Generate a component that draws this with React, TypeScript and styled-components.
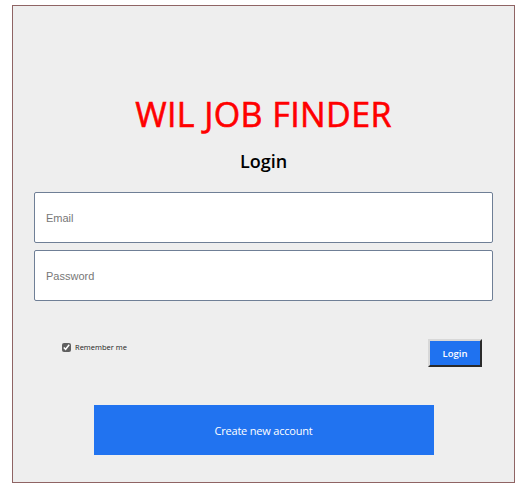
import React from "react";
import styled, { createGlobalStyle } from "styled-components";

const Global = createGlobalStyle`
  html, body { margin: 0; padding: 0; background: #ffffff; }
  body { font-family: "Open Sans", "Noto Sans", sans-serif; }
`;

const Frame = styled.div`
  box-sizing: border-box;
  margin: 5px 0 0 12px;
  width: 503px;
  height: 478px;
  border: 1px solid #8f6464;
  background: #eeeeee;
  padding: 0 21px 0 21px;
  display: flex;
  flex-direction: column;
  align-items: stretch;
`;

const Title = styled.h1`
  margin: 88px 0 0;
  font-family: "Open Sans", sans-serif;
  font-weight: 400;
  font-size: 34px;
  line-height: 40px;
  color: #ff0000;
  -webkit-text-stroke: 0.6px #ff0000;
  text-align: center;
  letter-spacing: 0.4px;
`;

const Heading = styled.h2`
  margin: 15px 0 0;
  font-family: "Open Sans", sans-serif;
  font-weight: 600;
  font-size: 18px;
  line-height: 24px;
  color: #000000;
  text-align: center;
`;

const Fields = styled.div`
  margin-top: 19px;
  display: flex;
  flex-direction: column;
  gap: 7px;
`;

const Input = styled.input`
  box-sizing: border-box;
  width: 100%;
  height: 51px;
  border: 1px solid #6f7f96;
  border-radius: 2px;
  background: #ffffff;
  padding: 0 11px;
  font-family: "Liberation Sans", Arial, sans-serif;
  font-size: 11px;
  color: #222;
  outline: none;
  &::placeholder { color: #777777; }
`;

const Row = styled.div`
  margin-top: 38px;
  padding: 0 11px 0 28px;
  display: flex;
  justify-content: space-between;
  align-items: flex-start;
`;

const Remember = styled.label`
  display: flex;
  align-items: center;
  gap: 4px;
  margin-top: 3px;
  font-family: "Open Sans", sans-serif;
  font-size: 7.5px;
  color: #222;
`;

const Check = styled.input`
  margin: 0;
  width: 9px;
  height: 9px;
  accent-color: #5f5f5f;
`;

const LoginButton = styled.button`
  box-sizing: border-box;
  width: 54px;
  height: 28px;
  background: #1f72f0;
  color: #ffffff;
  border: 2px solid;
  border-color: #d8d8d8 #2a2a2a #2a2a2a #d8d8d8;
  font-family: "Open Sans", sans-serif;
  font-weight: 600;
  font-size: 9.5px;
  padding: 0;
  cursor: pointer;
`;

const CreateButton = styled.button`
  align-self: center;
  margin-top: 38px;
  width: 340px;
  height: 50px;
  background: #2173f0;
  color: #ffffff;
  border: none;
  font-family: "Open Sans", sans-serif;
  font-size: 11px;
  letter-spacing: -0.2px;
  cursor: pointer;
`;

export default function App() {
  return (
    <>
      <Global />
      <Frame>
        <Title>WIL JOB FINDER</Title>
        <Heading>Login</Heading>
        <Fields>
          <Input type="email" placeholder="Email" />
          <Input type="password" placeholder="Password" />
        </Fields>
        <Row>
          <Remember>
            <Check type="checkbox" defaultChecked />
            Remember me
          </Remember>
          <LoginButton>Login</LoginButton>
        </Row>
        <CreateButton>Create new account</CreateButton>
      </Frame>
    </>
  );
}
